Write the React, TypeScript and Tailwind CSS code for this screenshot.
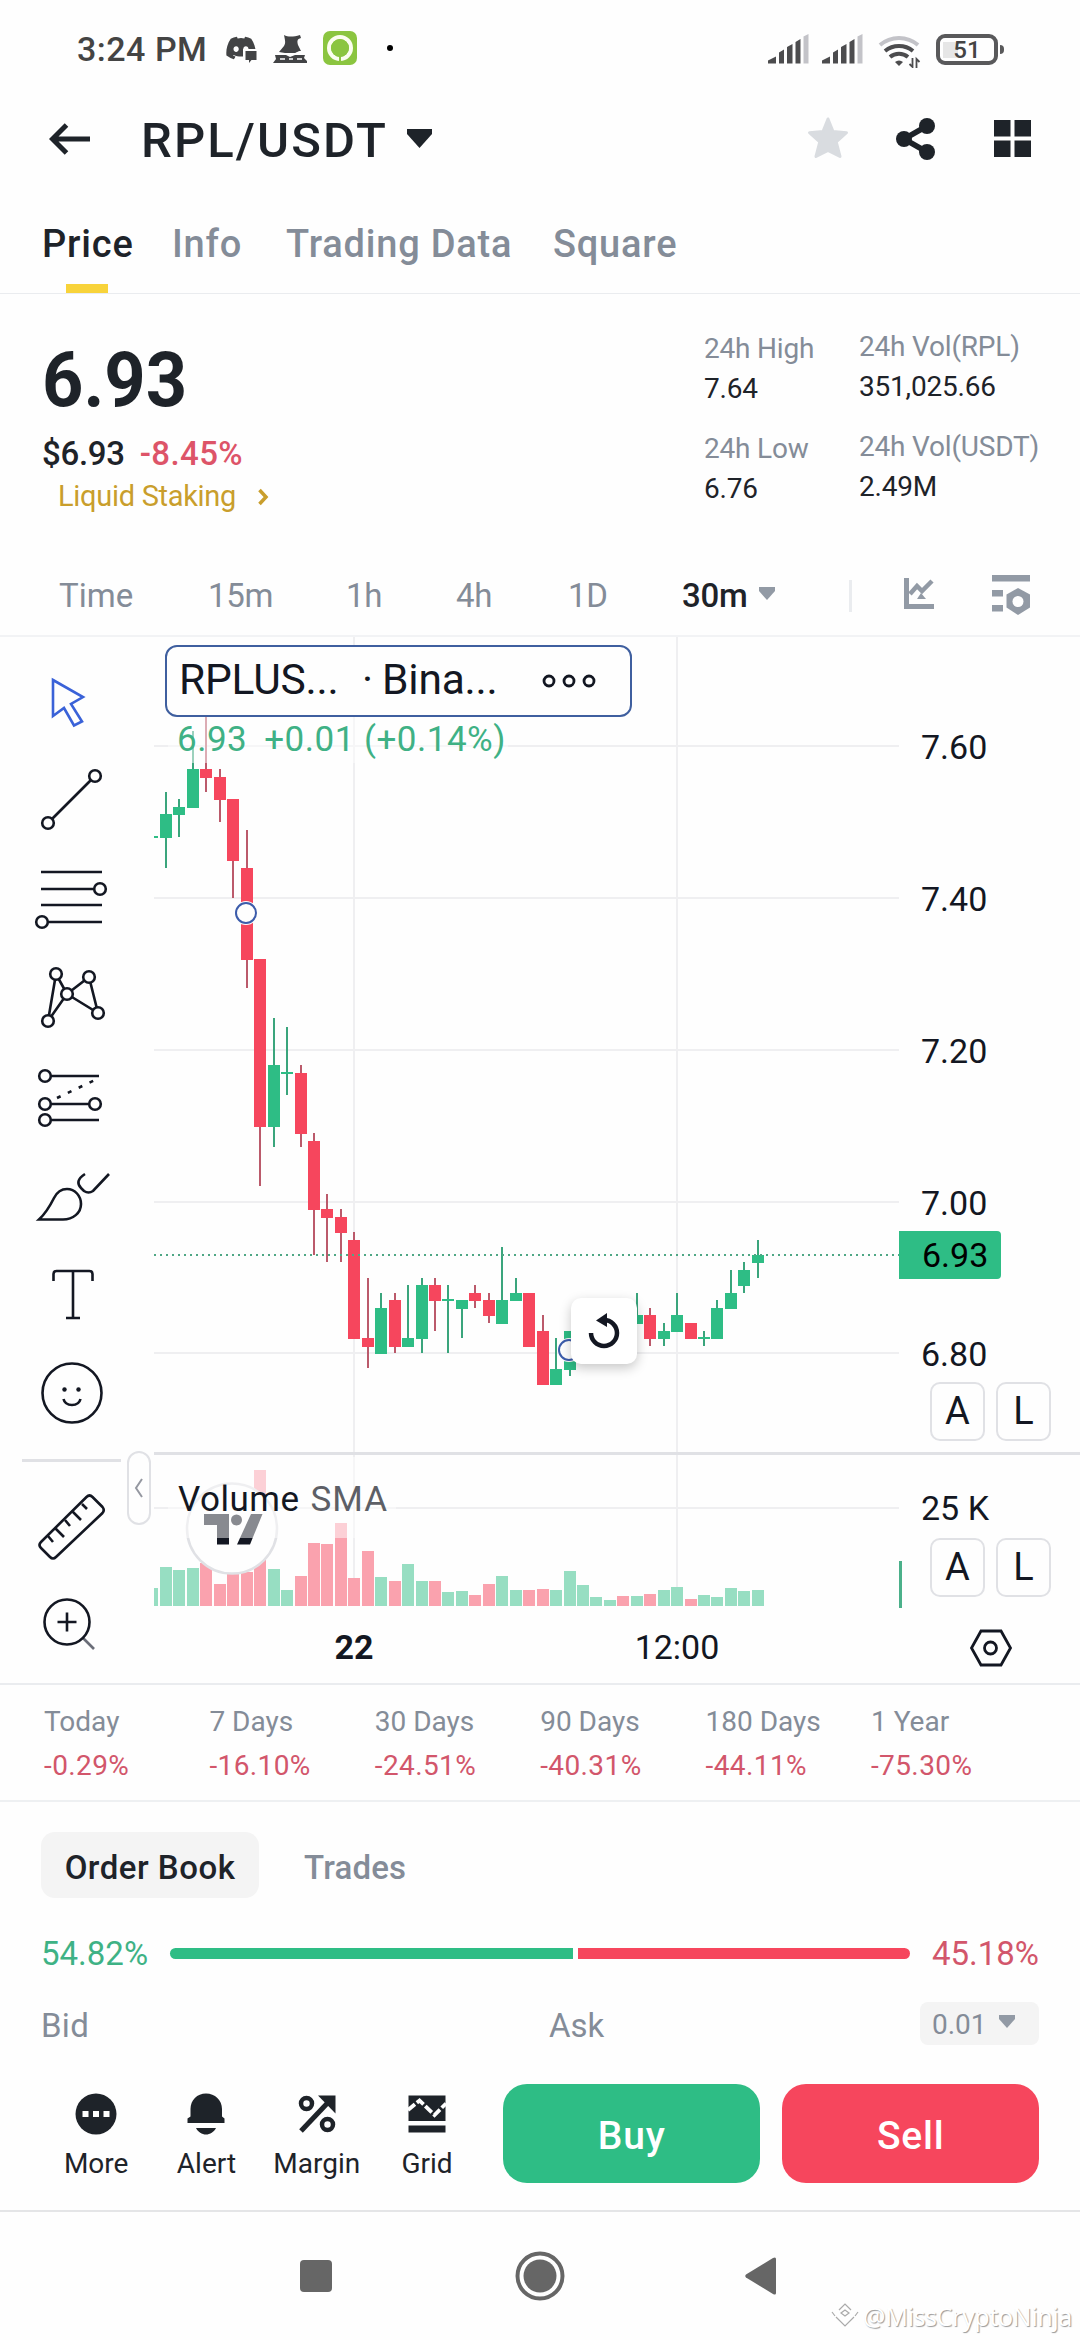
import * as React from 'react'
import { FaDiscord } from 'react-icons/fa'

type Candle = [up: 0 | 1, high: number, top: number, bottom: number, low: number]

const UP = '#2ebd85'
const DOWN = '#f6465d'
const UP_WICK = '#3aa57c'
const DOWN_WICK = '#bb5a6b'

const FIRST_X = 166
const STEP = 13.45
const VOLUME_BASE = 1606

// index in the list is the slot on the time axis, null = nothing drawn
const candles: (Candle | null)[] = [
  [1, 792, 814, 838, 868],
  [1, 799, 807, 815, 837],
  [1, 731, 769, 808, 808],
  [0, 717, 769, 778, 792],
  [0, 769, 777, 800, 822],
  [0, 799, 799, 861, 898],
  [0, 830, 868, 960, 988],
  [0, 959, 959, 1127, 1186],
  [1, 1018, 1065, 1127, 1147],
  [1, 1027, 1072, 1074, 1095],
  [0, 1065, 1073, 1134, 1147],
  [0, 1133, 1141, 1210, 1255],
  [0, 1194, 1209, 1218, 1262],
  [0, 1209, 1217, 1233, 1262],
  [0, 1232, 1240, 1339, 1339],
  [0, 1278, 1338, 1347, 1368],
  [1, 1293, 1308, 1354, 1354],
  [0, 1293, 1300, 1347, 1353],
  [1, 1285, 1338, 1347, 1347],
  [1, 1278, 1285, 1339, 1353],
  [0, 1278, 1285, 1301, 1331],
  [1, 1285, 1299, 1301, 1353],
  [1, 1300, 1300, 1309, 1338],
  [0, 1285, 1293, 1301, 1308],
  [0, 1293, 1300, 1316, 1323],
  [1, 1247, 1300, 1324, 1324],
  [1, 1278, 1293, 1301, 1301],
  [0, 1293, 1293, 1347, 1347],
  [0, 1315, 1331, 1385, 1385],
  [1, 1338, 1369, 1385, 1385],
  [1, 1331, 1331, 1370, 1376],
  null,
  null,
  null,
  null,
  [1, 1293, 1315, 1324, 1324],
  [0, 1308, 1315, 1339, 1346],
  [1, 1323, 1331, 1339, 1346],
  [1, 1293, 1315, 1332, 1332],
  [0, 1323, 1323, 1339, 1339],
  [1, 1331, 1337, 1339, 1346],
  [1, 1300, 1308, 1339, 1339],
  [1, 1270, 1293, 1309, 1309],
  [1, 1262, 1270, 1286, 1293],
  [1, 1240, 1255, 1263, 1278],
]

const volumes: [up: 0 | 1, top: number][] = [
  [1, 1567], [1, 1570], [1, 1568], [0, 1563], [0, 1584], [0, 1574], [0, 1572], [0, 1470], [1, 1569],
  [1, 1590], [0, 1576], [0, 1543], [0, 1544], [0, 1523], [0, 1578], [0, 1551], [1, 1577], [0, 1581],
  [1, 1564], [1, 1581], [0, 1581], [1, 1592], [1, 1591], [0, 1595], [0, 1584], [1, 1576], [1, 1590],
  [0, 1590], [0, 1589], [1, 1590], [1, 1571], [1, 1585], [1, 1597], [1, 1600], [0, 1596], [1, 1596],
  [0, 1594], [1, 1590], [1, 1587], [0, 1599], [1, 1595], [1, 1597], [1, 1588], [1, 1591], [1, 1590],
]

const priceTicks = [
  { label: '7.60', y: 746 },
  { label: '7.40', y: 898 },
  { label: '7.20', y: 1050 },
  { label: '7.00', y: 1202 },
  { label: '6.80', y: 1353 },
]

const performance = [
  { label: 'Today', value: '-0.29%' },
  { label: '7 Days', value: '-16.10%' },
  { label: '30 Days', value: '-24.51%' },
  { label: '90 Days', value: '-40.31%' },
  { label: '180 Days', value: '-44.11%' },
  { label: '1 Year', value: '-75.30%' },
]

const slotX = (i: number) => Math.round(FIRST_X + i * STEP)

export default function App() {
  return (
    <div className="flex h-[2340px] w-[1080px] flex-col overflow-hidden bg-[#fefefe] font-[Roboto,sans-serif] text-[#1e2329]">
      <StatusBar />
      <Header />
      <Tabs />
      <PriceSummary />
      <Intervals />
      <ChartPanel />
      <Performance />
      <OrderBook />
      <ActionBar />
      <NavBar />
    </div>
  )
}

function StatusBar() {
  return (
    <div className="flex h-24 shrink-0 items-center pl-[77px] pr-[76px]">
      <span className="mt-0.5 w-[148px] text-[34px] font-medium tracking-[0.5px] text-[#444]">3:24 PM</span>
      <div className="relative h-8 w-8">
        <FaDiscord className="size-8 text-[#424345]" />
        <svg viewBox="0 0 32 32" className="absolute inset-0 size-8">
          <path d="M18 17h14v13h-5l-3 3v-3h-6z" fill="#fefefe" />
          <path d="M20.500 19H31.500v9h-5l-2.500 3v-3h-3.500z" fill="#424345" />
        </svg>
      </div>
      <svg viewBox="0 0 34 30" className="ml-4 h-[30px] w-[34px]" fill="#424345">
        <path d="M11 2c4 2 9 2 16 0l1 3c-4 1-4 3-3 7l3 6c-4 0-4 2-7 2H12c-2 0-4-1-6-1l5-6c2-3 1-6 0-11z" />
        <path d="M2 22h11l4 2 5-2h10l-1 3 3 3v2H0l3-4z" />
        <path d="M7 26h5M16 26h4M24 26h5" stroke="#fefefe" strokeWidth="1.500" />
      </svg>
      <svg viewBox="0 0 34 34" className="ml-4 size-[34px]">
        <rect width="34" height="34" rx="7" fill="#8bc540" />
        <circle cx="17" cy="17" r="11" fill="none" stroke="#fbfdf0" strokeWidth="4" />
        <circle cx="17" cy="17" r="9" fill="#8bc540" />
        <path d="M17 25v7" stroke="#8bc540" strokeWidth="2" />
      </svg>
      <span className="ml-[30px] size-[6px] rounded-full bg-black" />
      <div className="ml-auto mt-0.5 flex items-center">
        <Signal />
        <div className="w-[13px]" />
        <Signal />
        <svg viewBox="0 0 44 34" className="ml-[15px] mt-[3px] h-[34px] w-[44px]" fill="none" strokeWidth="4">
          <path d="M2 11a29 29 0 0 1 38 0" stroke="#c3c3c8" />
          <path d="M7 17a22 22 0 0 1 28 0" stroke="#4c4c4e" />
          <path d="M12 23a14 14 0 0 1 18 0" stroke="#4c4c4e" />
          <path d="M17 28a6 6 0 0 1 8 0l-4 4z" fill="#4c4c4e" />
          <path d="M34.500 24v9l-3-3M38.500 34v-9l3 3" stroke="#4c4c4e" strokeWidth="1.800" />
        </svg>
        <div className="relative ml-[14px] flex h-[31px] w-[62px] items-center justify-center rounded-[9px] border-4 border-[#59595b] text-[24px] font-medium text-[#444]">
          <span className="absolute left-[3px] top-[4px] h-[16px] w-[15px] bg-[#e6e6e6]" />
          <span className="relative mt-px">51</span>
        </div>
        <span className="ml-[2px] h-[9px] w-[4px] rounded-r bg-[#59595b]" />
      </div>
    </div>
  )
}

function Signal() {
  return (
    <svg viewBox="0 0 41 30" className="h-[30px] w-[41px]" fill="#4c4c4e">
      <path d="M0 29.500v-3l8-4v7zM11 18.500l5-3v14h-5zM19 13l5.500-3v19.500H19zM27.500 8l5-3v24.500h-5z" />
      <path d="M35.500 2.500l5-2.500v29.500h-5z" fill="#c3c3c8" />
    </svg>
  )
}

function Header() {
  return (
    <div className="flex h-[84px] shrink-0 items-center pl-[49px] pr-[49px]">
      <svg viewBox="0 0 42 32" className="mt-px h-8 w-[42px]" fill="none" stroke="#1e2329" strokeWidth="5">
        <path d="M41 16H4M17.500 2L3.500 16l14 14" />
      </svg>
      <h1 className="ml-[50px] mt-[6px] text-[49px] font-medium leading-[60px] tracking-[2.100px]">RPL/USDT</h1>
      <svg viewBox="0 0 25 19" className="ml-[19px] mt-px h-[19px] w-[25px]">
        <path d="M0 0h25v5L12.500 19 0 5z" fill="#1e2329" />
      </svg>
      <svg viewBox="0 0 42 42" className="ml-auto size-[42px]">
        <path
          d="M21 2l5 12.500 13.500 1.200-10.300 9.300L33 39.500 21 33.500 9 39.500l3.800-14.500L2.500 15.700 16 14.500z"
          fill="#d9dce0"
          stroke="#d9dce0"
          strokeWidth="3"
          strokeLinejoin="round"
        />
      </svg>
      <svg viewBox="0 0 40 42" className="ml-[47px] mt-px h-[42px] w-10" fill="#1e2329">
        <path d="M31 8L8 21l23 13" fill="none" stroke="#1e2329" strokeWidth="5.500" />
        <circle cx="31" cy="8" r="8" />
        <circle cx="8" cy="21" r="8" />
        <circle cx="31" cy="34" r="8" />
      </svg>
      <svg viewBox="0 0 37 37" className="ml-[58px] mt-px size-[37px]" fill="#1e2329">
        <path d="M0 0h16.500v16.500H0zM20.500 0H37v16.500H20.500zM0 20.500h16.500V37H0zM20.500 20.500H37V37H20.500z" />
      </svg>
    </div>
  )
}

function Tabs() {
  return (
    <div className="flex h-[114px] shrink-0 items-start border-b border-[#eaecef] pl-[42px] pt-10 text-[38px] font-medium leading-[48px] tracking-[0.800px] text-[#848c98]">
      <div className="flex h-[73px] w-[130px] flex-col">
        <span className="text-[#1e2329]">Price</span>
        <span className="ml-6 mt-auto h-[9px] w-[42px] bg-[#f8d33a]" />
      </div>
      <span className="w-[114px]">Info</span>
      <span className="w-[267px]">Trading Data</span>
      <span>Square</span>
    </div>
  )
}

function PriceSummary() {
  return (
    <div className="flex h-[266px] shrink-0 pl-[42px]">
      <div className="w-[662px] pt-[48px]">
        <div className="origin-left scale-x-[0.950] text-[76px] font-bold leading-[76px]">6.93</div>
        <div className="mt-4 flex h-10 items-center gap-[15px] text-[33px] font-medium">
          <span className="tracking-[-0.300px]">$6.93</span>
          <span className="tracking-[0.400px] text-[#dd5468]">-8.45%</span>
        </div>
        <div className="ml-[16px] mt-[5px] flex h-9 items-center gap-[21px] text-[29px] tracking-[-0.300px] text-[#c99e2c]">
          Liquid Staking
          <svg viewBox="0 0 12 18" className="h-[18px] w-3" fill="none" stroke="#c99e2c" strokeWidth="3.500">
            <path d="M2.500 2l6.500 7-6.500 7" />
          </svg>
        </div>
      </div>
      <div className="w-[155px] pt-[35px]">
        <Stat label="24h High" value="7.64" />
        <Stat label="24h Low" value="6.76" />
      </div>
      <div className="pt-[33px]">
        <Stat label="24h Vol(RPL)" value="351,025.66" />
        <Stat label="24h Vol(USDT)" value="2.49M" />
      </div>
    </div>
  )
}

function Stat({ label, value }: { label: string; value: string }) {
  return (
    <div className="mb-5 text-[28px] leading-10 tracking-[-0.200px]">
      <div className="text-[#848c98]">{label}</div>
      <div>{value}</div>
    </div>
  )
}

function Intervals() {
  return (
    <div className="flex h-[77px] shrink-0 items-center border-b-2 border-[#f2f3f5] pb-1 pl-[59px] text-[33px] tracking-[-0.300px] text-[#848c98]">
      <span className="w-[149px] tracking-normal">Time</span>
      <span className="w-[138px]">15m</span>
      <span className="w-[110px]">1h</span>
      <span className="w-[112px]">4h</span>
      <span className="w-[114px]">1D</span>
      <span className="w-[77px] font-medium text-[#1e2329]">30m</span>
      <Caret />
      <span className="ml-[74px] h-8 w-[3px] bg-[#eaecef]" />
      <svg viewBox="0 0 30 31" className="mb-1 ml-[52px] h-[31px] w-[30px]" fill="none" stroke="#929aa5">
        <path d="M2.500 0v28.500H30" strokeWidth="5" />
        <path d="M6 16l7-8 5 5L28 3" strokeWidth="4.500" />
        <path d="M17 15l5 6h-9z" fill="#929aa5" stroke="none" />
      </svg>
      <svg viewBox="0 0 38 40" className="mb-0.5 ml-[58px] h-10 w-[38px]" fill="#929aa5">
        <path d="M0 0h38v6.500H0zM0 15h11v6.500H0zM0 30h11v6.500H0z" />
        <path d="M26 13l12 6.500v13L26 40l-11.500-7.500v-13z" />
        <circle cx="26" cy="26.500" r="5.500" fill="#fefefe" />
      </svg>
    </div>
  )
}

function Caret() {
  return (
    <svg viewBox="0 0 16 13" className="mb-1 h-[13px] w-4">
      <path d="M0 0h16v4L8 13 0 4z" fill="#929aa5" />
    </svg>
  )
}

function ChartPanel() {
  return (
    <div className="relative flex h-[1048px] shrink-0 border-b-2 border-[#eaecef]">
      <Toolbox />
      <Chart />

      <div className="absolute left-[165px] top-[8px] flex h-[72px] w-[467px] items-center rounded-[12px] border-2 border-[#3f5f9f] bg-[#fefefe] pb-[3px] pl-[12px] text-[42.500px] text-[#131722]">
        <span className="w-[183px] tracking-[-0.200px]">RPLUS...</span>
        <span className="w-[20px]">·</span>
        <span className="tracking-[-0.200px]">Bina...</span>
        <svg viewBox="0 0 56 14" className="ml-auto mr-[33px] mt-[3px] h-[14px] w-14" fill="none" stroke="#131722" strokeWidth="2.800">
          <circle cx="8" cy="7" r="5" />
          <circle cx="28" cy="7" r="5" />
          <circle cx="48" cy="7" r="5" />
        </svg>
      </div>
      <div className="absolute left-[177px] top-[82px] flex h-[42px] items-center gap-[17px] text-[35px] tracking-[0.500px] text-[#3fb185]">
        <span>6.93</span>
        <span>+0.01 (+0.14%)</span>
      </div>
      <div className="absolute left-[178px] top-[842px] flex h-[42px] items-center gap-[11px] text-[35px] tracking-[0.500px] text-[#131722]">
        <span>Volume</span>
        <span className="tracking-[1px] text-[#5d5f66]">SMA</span>
      </div>

      <button className="absolute left-[127px] top-[814px] flex h-[74px] w-[24px] items-center justify-center rounded-full border-2 border-[#e0e1e5] bg-[#fefefe]">
        <svg viewBox="0 0 10 20" className="h-5 w-2.5" fill="none" stroke="#9598a1" strokeWidth="2">
          <path d="M8 1L2 10l6 9" />
        </svg>
      </button>
      <button className="absolute left-[571px] top-[661px] flex size-[66px] items-center justify-center rounded-[10px] bg-white shadow-[0_4px_12px_rgba(0,0,0,0.22)]">
        <svg viewBox="0 0 34 36" className="h-9 w-[34px]">
          <path d="M4 20a13 13 0 1 0 13-13" fill="none" stroke="#131722" strokeWidth="4.500" />
          <path d="M9 7.500L20 0v14z" fill="#131722" />
        </svg>
      </button>

      <div className="absolute left-[930px] top-[745px] flex gap-[11px]">
        <ScaleButton>A</ScaleButton>
        <ScaleButton>L</ScaleButton>
      </div>
      <div className="absolute left-[930px] top-[901px] flex gap-[11px]">
        <ScaleButton>A</ScaleButton>
        <ScaleButton>L</ScaleButton>
      </div>
    </div>
  )
}

function ScaleButton({ children }: { children: React.ReactNode }) {
  return (
    <button className="flex h-[59px] w-[55px] items-center justify-center rounded-[10px] border-2 border-[#e0e1e5] pb-px text-[38px] text-[#131722]">
      {children}
    </button>
  )
}

function Toolbox() {
  return (
    <div className="w-[154px] shrink-0 pl-[22px] pt-[17px]">
      <Tool>
        <path d="M31 26l30 17-12 7 11 17.500-8 4L42 54l-11 8z" stroke="#3a62d8" />
      </Tool>
      <Tool>
        <path d="M30 67l39-39" />
        <Node x={73} y={24} />
        <Node x={26} y={71} />
      </Tool>
      <Tool>
        <path d="M19 22h61M19 39h61M19 55h61M19 72h61" />
        <Node x={78} y={39} />
        <Node x={20} y={72} />
      </Tool>
      <Tool>
        <path d="M26 73l8-47 11 20zM45 46l22-17 9 36z" />
        <Node x={34} y={26} />
        <Node x={67} y={29} />
        <Node x={45} y={46} />
        <Node x={26} y={73} />
        <Node x={76} y={65} />
      </Tool>
      <Tool>
        <path d="M23 30h54M23 58h50M23 74h54" />
        <path d="M35 52l38-18" strokeDasharray="4 8" />
        <Node x={23} y={30} />
        <Node x={23} y={58} />
        <Node x={73} y={58} />
        <Node x={23} y={74} />
      </Tool>
      <Tool>
        <path d="M17 75.500C25 68 29 60 32 54c3-6 7-9 13-9 8 0 14 7 14 15 0 9-8 15.500-18 15.500z" />
        <path d="M63 30c-8 5-8 10-4 14l3 3c3 2 6 2 9 0L87 30" />
      </Tool>
      <Tool>
        <path d="M31.500 39v-7q0-3 3-3h33q3 0 3 3v7M51 29v46M44 76h14" />
      </Tool>
      <Tool>
        <circle cx="50" cy="53" r="29.500" />
        <circle cx="42.500" cy="49.500" r="2.200" fill="#131722" stroke="none" />
        <circle cx="56.500" cy="49.500" r="2.200" fill="#131722" stroke="none" />
        <path d="M41.500 59c2 8 15 8 17 0" />
      </Tool>
      <div className="mt-[21px] h-[3px] w-[99px] bg-[#e0e1e5]" />
      <div className="h-4" />
      <Tool>
        <path d="M64.500 19q3-3 6 0l10 10q2.500 3 0 6L34 79q-3 3-6 0L19 70q-3-3 0-6z" />
        <path d="M60 26l5 5M50 33l9 9M43 42l5 6M33 50l9 9M26 58l5 6" />
      </Tool>
      <Tool>
        <path d="M61 62l11 11" stroke="#6a6d78" />
        <circle cx="45" cy="46" r="22.500" />
        <path d="M35.500 46h19M45 36.500v19" />
      </Tool>
    </div>
  )
}

function Tool({ children }: { children: React.ReactNode }) {
  return (
    <svg viewBox="0 0 98 98" className="block size-[98px]" fill="none" stroke="#131722" strokeWidth="2.600">
      {children}
    </svg>
  )
}

function Node({ x, y }: { x: number; y: number }) {
  return <circle cx={x} cy={y} r="5.800" fill="#fefefe" />
}

function Chart() {
  return (
    <svg viewBox="154 637 926 1046" className="h-[1046px] w-[926px]" fontFamily="Roboto" fontSize="34" fill="#131722">
      {/* grid */}
      <g fill="#efeff1">
        <rect x="353" y="637" width="2" height="969" />
        <rect x="676" y="637" width="2" height="969" />
        {priceTicks.map(t => (
          <rect key={t.label} x="154" y={t.y - 1} width="745" height="2" />
        ))}
        <rect x="154" y="1507" width="745" height="2" />
      </g>

      {/* volume */}
      <rect x="154" y="1588" width="4" height="18" fill="#97dec2" />
      {volumes.map(([up, top], i) => (
        <rect key={i} x={slotX(i) - 6} y={top} width="12" height={VOLUME_BASE - top} fill={up ? '#97dec2' : '#faa2ae'} />
      ))}
      <rect x="899" y="1561" width="3" height="47" fill="#4bb08a" />

      {/* price */}
      <rect x="154" y="836" width="4" height="2" fill={UP} />
      {candles.map((c, i) => {
        if (!c) return null
        const [up, high, top, bottom, low] = c
        const x = slotX(i)
        return (
          <g key={i}>
            <rect x={x - 1} y={high} width="2" height={low - high} fill={up ? UP_WICK : DOWN_WICK} />
            <rect x={x - 6} y={top} width="12" height={bottom - top} fill={up ? UP : DOWN} />
          </g>
        )
      })}
      <path d="M154 1255h745" stroke="#4fa785" strokeWidth="2" strokeDasharray="2 4" />

      {/* range handles */}
      {[[246, 913], [569, 1350]].map(([x, y]) => (
        <g key={x} fill="#fefefe">
          <circle cx={x} cy={y} r="12" />
          <circle cx={x} cy={y} r="10" stroke="#3c5cab" strokeWidth="2" />
        </g>
      ))}

      {/* logo */}
      <circle cx="232" cy="1528.500" r="45" fill="#fefefe" stroke="#e0e1e5" strokeWidth="2.500" />
      <path d="M204 1514h25v30.500h-12V1525h-13zM251 1514h11.500L250 1544.500h-13z" />
      <circle cx="236.500" cy="1520" r="5.500" />

      {/* legends fade whatever they cover */}
      <rect x="168" y="717" width="340" height="46" fill="#fefefe" opacity="0.5" />
      <rect x="168" y="1457" width="228" height="81" fill="#fefefe" opacity="0.5" />

      {/* price scale */}
      <rect x="154" y="1452" width="926" height="3" fill="#e0e1e5" />
      {priceTicks.map(t => (
        <text key={t.label} x="921" y={t.y + 12.500}>{t.label}</text>
      ))}
      <text x="921" y="1520">25 K</text>
      <path d="M899 1231h98q4 0 4 4v40q0 4-4 4h-98z" fill={UP} />
      <text x="922" y="1267" fill="#000">6.93</text>

      {/* time scale */}
      <text x="354" y="1659" textAnchor="middle" fontWeight="700">22</text>
      <text x="677" y="1659" textAnchor="middle">12:00</text>
      <g fill="none" stroke="#131722" strokeWidth="2.800">
        <path d="M981 1631h20l9.500 17-9.500 17h-20l-9.500-17z" />
        <circle cx="990.500" cy="1648" r="6" />
      </g>
    </svg>
  )
}

function Performance() {
  return (
    <div className="flex h-[117px] shrink-0 border-b-2 border-[#eef0f2] pl-[44px] pt-[15px] text-[28px] leading-[44px]">
      {performance.map(p => (
        <div key={p.label} className="w-[165.400px]">
          <div className="text-[#848c98]">{p.label}</div>
          <div className="tracking-[0.400px] text-[#d2566b]">{p.value}</div>
        </div>
      ))}
    </div>
  )
}

function OrderBook() {
  return (
    <div className="h-[260px] shrink-0 pl-[41px] pr-[41px] pt-[30px]">
      <div className="flex items-center text-[33px] font-medium">
        <div className="flex h-[66px] w-[218px] items-center justify-center rounded-[14px] bg-[#f4f4f4] pt-[5px] tracking-[0.500px] text-[#1e2329]">
          Order Book
        </div>
        <div className="ml-[45px] pt-[5px] tracking-[0.200px] text-[#848c98]">Trades</div>
      </div>
      <div className="mt-[33px] flex h-11 items-center text-[33px]">
        <span className="w-[129px] pt-0.5 text-[#3eb285]">54.82%</span>
        <span className="h-[11px] w-[403px] rounded-l-full bg-[#2ebd85]" />
        <span className="ml-[5px] h-[11px] w-[332px] rounded-r-full bg-[#f6465d]" />
        <span className="ml-auto pt-0.5 text-[#d2566b]">45.18%</span>
      </div>
      <div className="mt-[26px] flex h-[44px] items-center text-[33px] text-[#848c98]">
        <span className="w-[508px] pt-[5px] tracking-[0.300px]">Bid</span>
        <span className="pt-[5px]">Ask</span>
        <div className="ml-auto flex h-[43px] w-[119px] items-center justify-between rounded-[8px] bg-[#f4f4f4] pl-3 pr-6 text-[28px]">
          <span className="pt-[3px]">0.01</span>
          <Caret />
        </div>
      </div>
    </div>
  )
}

function ActionBar() {
  return (
    <div className="flex h-[150px] shrink-0 items-start border-b-2 border-[#e4e5e7] pl-[41px] pt-[22px]">
      <Action label="More">
        <circle cx="21" cy="21" r="20.500" />
        <path d="M7.500 18h6v6h-6zM18 18h6v6h-6zM28.500 18h6v6h-6z" fill="#fefefe" />
      </Action>
      <Action label="Alert">
        <path d="M2.500 30v-4.500l3-2V16C5.500 7 12 .5 21 .5S37 7 37 16v7.500l2.500 2V30zM11 35h20c-2 4-6 6.500-10 6.500S13 39 11 35z" />
      </Action>
      <Action label="Margin">
        <g fill="none" stroke="#1e2329">
          <circle cx="10.500" cy="10.500" r="5.500" strokeWidth="4.500" />
          <circle cx="31.500" cy="31.500" r="5.500" strokeWidth="4.500" />
          <path d="M5 38L32 9.500" strokeWidth="5" />
        </g>
        <path d="M22 2.500h17.500v18z" />
      </Action>
      <Action label="Grid">
        <path d="M2.500 2.500h37v25.500h-37zM2.500 32.500h37v7h-37z" />
        <path d="M2 17L13.500 7.500 28.500 22 40 10.500" fill="none" stroke="#fefefe" strokeWidth="3.800" strokeDasharray="9 2.500" />
      </Action>
      <button className="ml-[21px] flex h-[99px] w-[257px] items-center justify-center rounded-[24px] bg-[#2ebd85] pt-[6px] text-[39px] font-medium tracking-[0.800px] text-white">Buy</button>
      <button className="ml-[22px] flex h-[99px] w-[257px] items-center justify-center rounded-[24px] bg-[#f6465d] pt-[6px] text-[39px] font-medium tracking-[0.800px] text-white">Sell</button>
    </div>
  )
}

function Action({ label, children }: { label: string; children: React.ReactNode }) {
  return (
    <div className="flex w-[110.300px] flex-col items-center pt-[9px]">
      <svg viewBox="0 0 42 42" className="size-[42px]" fill="#1e2329">
        {children}
      </svg>
      <span className="mt-[11px] text-[28px] leading-[36px]">{label}</span>
    </div>
  )
}

function NavBar() {
  return (
    <div className="relative flex h-[128px] items-start pl-[300px] pt-[38px]">
      <span className="mt-[10px] size-[32px] rounded-sm bg-[#666]" />
      <svg viewBox="0 0 50 50" className="ml-[183px] mt-px size-[50px]">
        <circle cx="25" cy="25" r="22.500" fill="none" stroke="#666" strokeWidth="4" />
        <circle cx="25" cy="25" r="16.500" fill="#666" />
      </svg>
      <svg viewBox="0 0 31 38" className="ml-[180px] mt-[7px] h-[38px] w-[31px]" fill="#666">
        <path d="M28 1q3-1.500 3 1v34q0 2.500-3 1L1 20.500q-1.500-1.500 0-3z" />
      </svg>
      {/* author mark */}
      <div className="absolute right-[8px] top-[87px] flex items-center gap-1 font-['Noto_Sans',sans-serif] text-[25px] leading-[34px] tracking-[-0.400px] text-white [text-shadow:1px_1px_1px_#999]">
        <svg viewBox="0 0 28 26" className="h-[26px] w-7" fill="none" stroke="#aaa" strokeWidth="1.200">
          <path d="M8 7l6-6 6 6M1 9l3 4M27 9l-3 4M10 10l4-3 4 3-4 3zM5 14l9 9 9-9" />
        </svg>
        @MissCryptoNinja
      </div>
    </div>
  )
}
